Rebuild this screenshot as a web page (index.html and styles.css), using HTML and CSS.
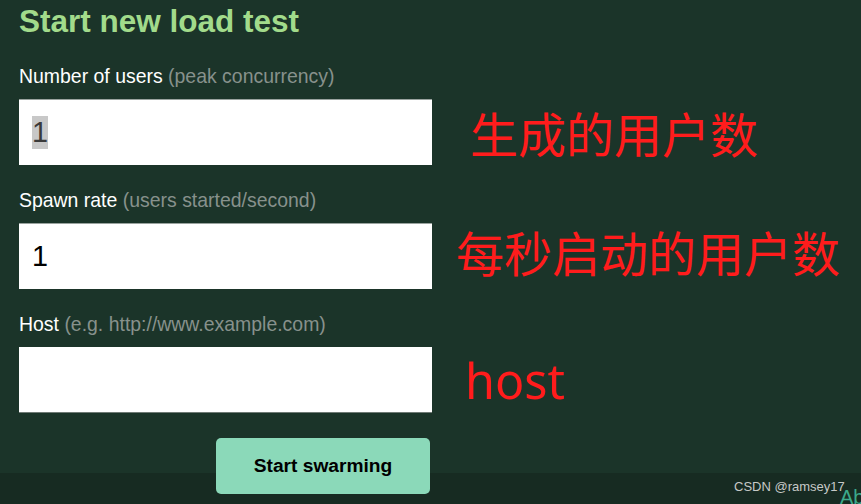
FILE: index.html
```html
<!DOCTYPE html>
<html lang="en">
<head>
<meta charset="utf-8">
<title>Start new load test</title>
<link rel="stylesheet" href="styles.css">
</head>
<body>
<main class="page">
  <h1 class="title">Start new load test</h1>

  <div class="field">
    <label class="label">Number of users <span class="hint">(peak concurrency)</span></label>
    <div class="row">
      <div class="box"><span class="value value--selected">1</span></div>
      <div class="note note--users">生成的用户数</div>
    </div>
  </div>

  <div class="field">
    <label class="label">Spawn rate <span class="hint">(users started/second)</span></label>
    <div class="row">
      <div class="box"><span class="value">1</span></div>
      <div class="note note--rate">每秒启动的用户数</div>
    </div>
  </div>

  <div class="field">
    <label class="label">Host <span class="hint">(e.g. http://www.example.com)</span></label>
    <div class="row">
      <div class="box box--host"><span class="value"></span></div>
      <div class="note note--host">host</div>
    </div>
  </div>

  <div class="actions">
    <button class="btn" type="button">Start swarming</button>
  </div>
</main>
<div class="watermark">CSDN @ramsey17</div>
<div class="ab">Ab</div>
</body>
</html>
```

FILE: styles.css
```css
html, body {
  margin: 0;
  padding: 0;
  height: 504px;
  overflow: hidden;
}

body {
  background: linear-gradient(to bottom, #1b3429 0, #1b3429 473px, #172b22 473px, #172b22 100%);
  font-family: "Liberation Sans", Arial, sans-serif;
  color: #ffffff;
  position: relative;
}

.page {
  padding-left: 19px;
  display: flex;
  flex-direction: column;
}

.title {
  margin: 0;
  padding-top: 1px;
  font-size: 31.5px;
  line-height: 40px;
  font-weight: bold;
  color: #a2db8b;
}

.field {
  display: flex;
  flex-direction: column;
  gap: 11px;
  margin-top: 23px;
}

.label {
  font-size: 19.45px;
  line-height: 24px;
  color: #ffffff;
  white-space: nowrap;
}

.hint {
  color: #87918c;
}

.row {
  display: flex;
  align-items: center;
}

.box {
  width: 413px;
  height: 66px;
  box-sizing: border-box;
  background: #ffffff;
  border-top: 1px solid #9aa39f;
  padding-left: 13px;
  display: flex;
  align-items: center;
  flex: none;
}

.box--host {
  border-top: none;
  border-bottom: 1px solid #6f7a75;
}

.value {
  font-size: 28.8px;
  line-height: normal;
  color: #000000;
}

.value--selected {
  background: #c8c8c8;
  color: #3a3a3a;
}

.note {
  font-family: "Noto Sans CJK SC", "Noto Sans", sans-serif;
  font-size: 48px;
  line-height: 48px;
  color: #ff1c1c;
  white-space: nowrap;
}

.note--users {
  margin-left: 38px;
}

.note--rate {
  margin-left: 24px;
  margin-bottom: 10px;
}

.note--host {
  font-family: "Noto Sans", sans-serif;
  font-size: 48.5px;
  line-height: 50px;
  margin-left: 33px;
}

.actions {
  width: 413px;
  display: flex;
  justify-content: flex-end;
  margin-top: 25px;
}

.btn {
  width: 214px;
  height: 56px;
  margin-right: 2px;
  border: none;
  border-radius: 5px;
  background: #8bd9b9;
  color: #000000;
  font-family: "Liberation Sans", Arial, sans-serif;
  font-size: 19.2px;
  font-weight: bold;
  padding: 0;
}

.watermark {
  position: absolute;
  left: 734px;
  top: 479px;
  font-size: 13px;
  line-height: 15px;
  color: #c6c9c7;
  white-space: nowrap;
}

.ab {
  position: absolute;
  left: 840px;
  top: 487px;
  font-size: 20px;
  line-height: 20px;
  color: #3ca98b;
  white-space: nowrap;
}
```
